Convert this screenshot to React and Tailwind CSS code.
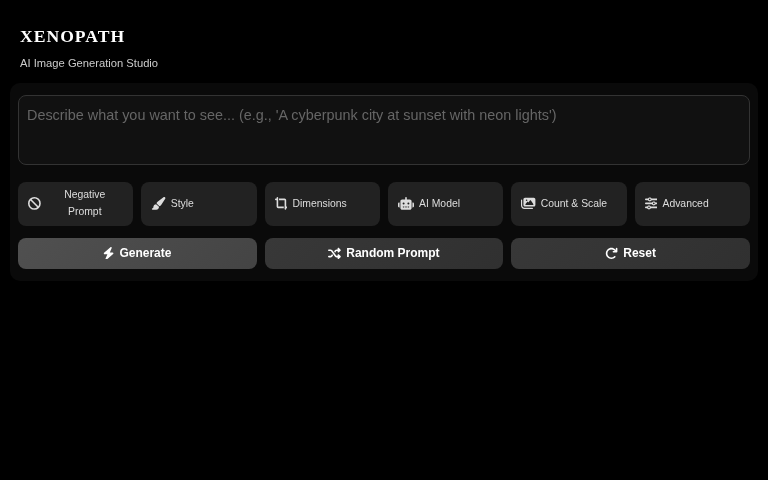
import { FaBan, FaPaintbrush, FaCropSimple, FaRobot, FaImages, FaSliders, FaBolt, FaShuffle, FaArrowRotateRight } from "react-icons/fa6";

const OPTIONS = [
  { icon: FaBan, label: "Negative Prompt", width: "w-[12.8px]", labelClass: "ml-[1px] mb-[2px] w-[76px]" },
  { icon: FaPaintbrush, label: "Style", width: "w-[14.4px]" },
  { icon: FaCropSimple, label: "Dimensions", width: "w-[12.8px]" },
  { icon: FaRobot, label: "AI Model", width: "w-[16px]" },
  { icon: FaImages, label: "Count & Scale", width: "w-[14.4px]" },
  { icon: FaSliders, label: "Advanced", width: "w-[12.8px]" },
];

const ACTIONS = [
  { icon: FaBolt, label: "Generate", width: "w-[11.2px]", bg: "bg-[linear-gradient(135deg,#505050,#444444)]" },
  { icon: FaShuffle, label: "Random Prompt", width: "w-[12.8px]", bg: "bg-[linear-gradient(135deg,#383838,#303030)]" },
  { icon: FaArrowRotateRight, label: "Reset", width: "w-[12.8px]", bg: "bg-[linear-gradient(135deg,#383838,#303030)]" },
];

export default function App() {
  return (
    <div className="min-h-screen bg-black text-white font-['Liberation_Sans',sans-serif]">
      <header className="px-5 pt-6 pb-[13px] [will-change:transform]">
        <h1 className="font-['Liberation_Serif',serif] text-[17.6px] leading-[24px] font-bold tracking-[1px]">XENOPATH</h1>
        <p className="mt-[9px] text-[11.2px] leading-[13px] text-[#cccccc]">AI Image Generation Studio</p>
      </header>

      <div className="mx-[10px] rounded-[10px] bg-[#0a0a0a] px-2 py-3 [will-change:transform]">
        <textarea
          className="block h-[70px] w-full resize-none rounded-lg border border-[#333333] bg-[#111111] px-2 py-[9px] text-[14.4px] leading-[20px] text-white outline-none placeholder:text-[#666666]"
          placeholder="Describe what you want to see... (e.g., 'A cyberpunk city at sunset with neon lights')"
        />

        <div className="mt-[17px] grid grid-cols-6 gap-2">
          {OPTIONS.map(({ icon: Icon, label, width, labelClass }) => (
            <button key={label} className="flex h-[44px] items-center gap-[5px] rounded-lg bg-[#222222] pr-[10px] pb-[1px] pl-[10px] text-[10.4px] leading-[17px] text-[#dddddd]">
              <Icon className={`h-[12.8px] shrink-0 ${width}`} />
              <span className={labelClass}>{label}</span>
            </button>
          ))}
        </div>

        <div className="mt-3 grid grid-cols-3 gap-2">
          {ACTIONS.map(({ icon: Icon, label, width, bg }) => (
            <button key={label} className={`flex h-[31px] items-center justify-center gap-[5px] rounded-lg pb-[1px] text-[12px] font-bold text-white ${bg}`}>
              <Icon className={`h-[12.8px] ${width}`} />
              {label}
            </button>
          ))}
        </div>
      </div>
    </div>
  );
}
